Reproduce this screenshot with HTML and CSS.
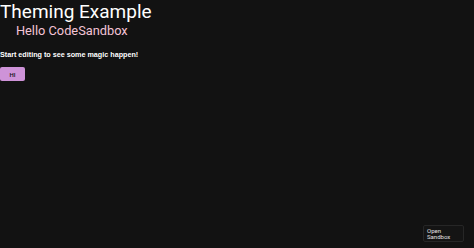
FILE: index.html
```html
<!DOCTYPE html>
<html lang="en">
<head>
    <meta charset="UTF-8">
    <title>Theming Example</title>
    <link rel="stylesheet" href="styles.css">
</head>
<body>
    <div class="app">
        <div class="header">
            <h1>Theming Example</h1>
            <h2>Hello CodeSandbox</h2>
        </div>
        <p class="intro">Start editing to see some magic happen!</p>
        <button class="hi-btn">HI</button>
    </div>
    <a class="open-sandbox" href="#">Open<br>Sandbox</a>
</body>
</html>
```

FILE: styles.css
```css
body {
    margin: 0;
    background-color: #121212;
    color: #ffffff;
    font-family: Roboto, Arial, sans-serif;
    height: 248px;
    overflow: hidden;
}

.header {
    display: inline-block;
    text-align: center;
}

h1 {
    margin: 0;
    padding-top: 1px;
    font-size: 19px;
    font-weight: 400;
    line-height: 22px;
}

h2 {
    margin: 0;
    font-size: 12.8px;
    font-weight: 400;
    line-height: 16px;
    color: #f4c4d6;
    margin-left: -8px;
}

.intro {
    margin: 11px 0 0;
    font-family: "Liberation Sans", Arial, sans-serif;
    font-size: 7.2px;
    font-weight: 700;
    line-height: 10px;
}

.hi-btn {
    display: block;
    margin-top: 7px;
    width: 25px;
    height: 14px;
    padding: 0;
    border: none;
    border-radius: 2px;
    background-color: #ce93d8;
    color: #121212;
    font-family: Roboto, Arial, sans-serif;
    font-size: 6px;
    font-weight: 500;
    cursor: pointer;
}

.open-sandbox {
    position: absolute;
    right: 10px;
    bottom: 6px;
    width: 33px;
    padding: 2px 3px 1px;
    border: 1px solid #262626;
    border-radius: 2px;
    background-color: #141414;
    color: #e0e0e0;
    font-size: 6px;
    line-height: 6px;
    text-decoration: none;
}
```
